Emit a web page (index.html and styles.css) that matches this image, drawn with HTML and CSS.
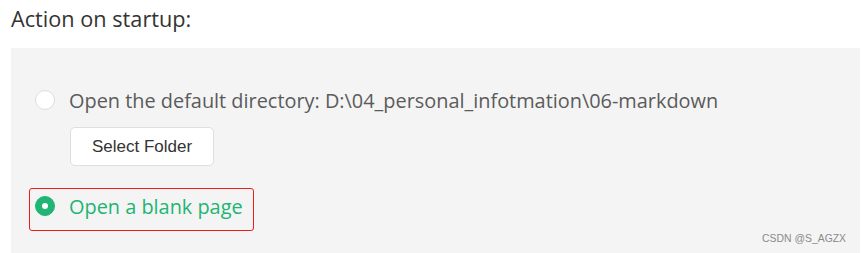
FILE: index.html
```html
<!DOCTYPE html>
<html>
<head>
<meta charset="utf-8">
<link rel="stylesheet" href="styles.css">
</head>
<body>
<div class="page">
  <div class="title">Action on startup:</div>
  <div class="panel">
    <label class="option">
      <span class="radio"></span>
      <span class="label">Open the default directory: D:\04_personal_infotmation\06-markdown</span>
    </label>
    <button class="btn">Select Folder</button>
    <label class="option selected">
      <span class="radio checked"></span>
      <span class="label">Open a blank page</span>
    </label>
    <div class="watermark">CSDN @S_AGZX</div>
  </div>
</div>
</body>
</html>
```
FILE: styles.css
```css
html, body {
  margin: 0;
  padding: 0;
  background: #ffffff;
}
.page {
  width: 862px;
  height: 253px;
  font-family: "Open Sans", sans-serif;
}
.title {
  height: 48px;
  box-sizing: border-box;
  padding: 4px 0 0 11px;
  font-size: 21.7px;
  line-height: 30px;
  color: #333333;
}
.panel {
  position: relative;
  margin-left: 11px;
  width: 849px;
  height: 205px;
  box-sizing: border-box;
  background: #f4f4f4;
  padding: 38px 0 0 24px;
}
.option {
  display: flex;
  align-items: center;
  gap: 15px;
  height: 28px;
  font-size: 19.9px;
  color: #5b5b5b;
}
.radio {
  width: 18px;
  height: 18px;
  border-radius: 50%;
  background: #ffffff;
  border: 1px solid #dcdce6;
  flex: none;
  display: flex;
  align-items: center;
  justify-content: center;
}
.radio.checked {
  background: #20b573;
  border-color: #20b573;
}
.radio.checked::after {
  content: "";
  width: 6px;
  height: 6px;
  border-radius: 50%;
  background: #ffffff;
}
.option .label {
  margin-left: -1px;
}
.btn {
  display: block;
  margin: 13px 0 0 35px;
  width: 144px;
  height: 39px;
  background: #ffffff;
  border: 1px solid #dcdfe6;
  border-radius: 5px;
  font-family: "Liberation Sans", Arial, sans-serif;
  font-size: 17px;
  color: #333333;
  padding: 0;
}
.option.selected {
  margin: 22px 0 0 -6px;
  width: 225px;
  height: 43px;
  box-sizing: border-box;
  border: 1px solid #ee1c1c;
  border-radius: 3px;
  padding: 0 0 7px 5px;
  color: #20b573;
}
.watermark {
  position: absolute;
  right: 14px;
  bottom: 9px;
  font-family: "Liberation Sans", Arial, sans-serif;
  font-size: 10.4px;
  color: #8a8a8a;
}
```
